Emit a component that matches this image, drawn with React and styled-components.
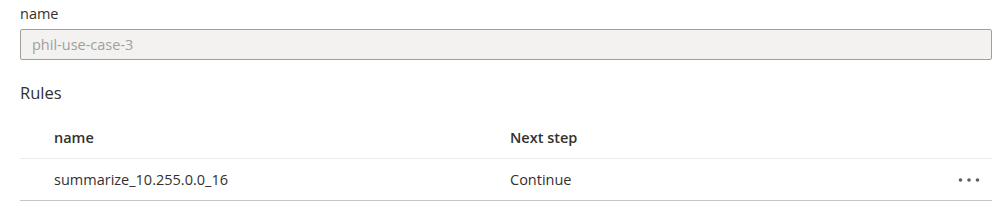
import React from "react"
import styled, { createGlobalStyle } from "styled-components"

const GlobalStyle = createGlobalStyle`
  body {
    margin: 0;
    background: #ffffff;
    font-family: "Open Sans", "Noto Sans", sans-serif;
    color: #323130;
  }
`

const Page = styled.div`
  padding: 4px 8px 0 20px;
`

const Label = styled.div`
  font-size: 14.5px;
  line-height: 20px;
  color: #323130;
  margin-bottom: 5px;
`

const Input = styled.div`
  box-sizing: border-box;
  height: 31px;
  border: 1px solid #a19f9d;
  border-radius: 2px;
  background: #f3f2f1;
  padding: 0 11px;
  display: flex;
  align-items: center;
  font-size: 14.5px;
  color: #a19f9d;
`

const Heading = styled.div`
  font-size: 16.5px;
  line-height: 22px;
  margin-top: 22px;
  color: #323130;
`

const Table = styled.div`
  margin-top: 13px;
`

const Row = styled.div`
  box-sizing: border-box;
  display: grid;
  grid-template-columns: 490px 1fr 47px;
  height: 42px;
  align-items: center;
  border-bottom: 1px solid ${(p) => (p.$header ? "#edebe9" : "#c8c6c4")};
  font-size: 14.5px;
  font-weight: ${(p) => (p.$header ? 600 : 400)};
  color: #323130;
`

const Cell = styled.div`
  padding-left: ${(p) => (p.$first ? "34px" : "0")};
  white-space: nowrap;
`

const Actions = styled.div`
  display: flex;
  justify-content: center;
  align-items: center;
  padding-top: 1px;
`

const MoreIcon = () => (
  <svg width="22" height="6" viewBox="0 0 22 6" aria-hidden="true">
    <circle cx="2.5" cy="3" r="1.8" fill="#605e5c" />
    <circle cx="11" cy="3" r="1.8" fill="#605e5c" />
    <circle cx="19.5" cy="3" r="1.8" fill="#605e5c" />
  </svg>
)

export default function App() {
  return (
    <>
      <GlobalStyle />
      <Page>
        <Label>name</Label>
        <Input>phil-use-case-3</Input>
        <Heading>Rules</Heading>
        <Table>
          <Row $header>
            <Cell $first>name</Cell>
            <Cell>Next step</Cell>
            <Cell />
          </Row>
          <Row>
            <Cell $first>summarize_10.255.0.0_16</Cell>
            <Cell>Continue</Cell>
            <Actions>
              <MoreIcon />
            </Actions>
          </Row>
        </Table>
      </Page>
    </>
  )
}
